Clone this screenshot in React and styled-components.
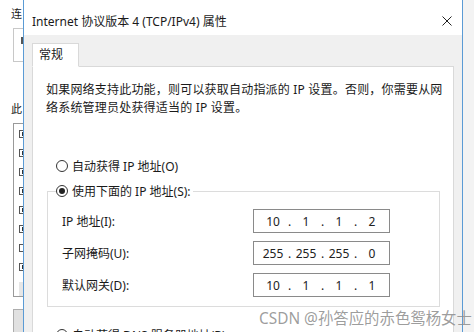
import React from "react";
import styled, { createGlobalStyle } from "styled-components";

const GlobalStyles = createGlobalStyle`
  html, body {
    margin: 0;
    padding: 0;
    overflow: hidden;
    background: #f3f3f3;
  }
  body {
    font-family: "Noto Sans", "Noto Sans CJK SC", sans-serif;
    font-size: 12px;
    color: #1a1a1a;
  }
`;

const Screen = styled.div`
  position: relative;
  display: flex;
  width: 474px;
  height: 332px;
  overflow: hidden;
`;

/* window that lies behind the dialog, only its right edge is visible */
const BackWindow = styled.div`
  width: 23px;
  flex: none;
  overflow: hidden;
  background: #fff;
  display: flex;
  flex-direction: column;
  padding: 7px 0 0 11px;
  box-sizing: border-box;
`;

const BackLabel = styled.div`
  font-size: 11px;
  line-height: 14px;
  margin-top: ${(p) => p.$top || "0"};
`;

const BackField = styled.div`
  width: 40px;
  height: 34px;
  margin: 7px 0 0 2px;
  border: 1px solid #c8c8c8;
  box-sizing: border-box;
  position: relative;
  flex: none;

  &::after {
    content: "";
    position: absolute;
    left: 7px;
    top: 8px;
    width: 2px;
    height: 7px;
    background: #555;
  }
`;

const BackList = styled.div`
  width: 40px;
  height: 174px;
  margin: 7px 0 0 2px;
  border: 1px solid #9a9a9a;
  box-sizing: border-box;
  display: flex;
  flex-direction: column;
  padding: 6px 0 0 5px;
  gap: 11px;
  flex: none;
`;

const BackCheck = styled.div`
  width: 9px;
  height: 9px;
  border: 1px solid #555;
  box-sizing: border-box;
  display: flex;
  align-items: center;
  justify-content: center;

  &::after {
    content: "";
    width: 4px;
    height: 4px;
    background: ${(p) => (p.$on ? "#333" : "transparent")};
  }
`;

const BackScroll = styled.div`
  margin-top: auto;
  height: 14px;
  background: #e6e6e6;
  font-size: 9px;
  line-height: 14px;
  padding-left: 5px;
  color: #333;
`;

const BackButton = styled.div`
  width: 40px;
  height: 30px;
  margin: 12px 0 0 2px;
  background: #e1e1e1;
  border: 1px solid #adadad;
  box-sizing: border-box;
  flex: none;
`;

const Dialog = styled.div`
  width: 440px;
  flex: none;
  display: flex;
  flex-direction: column;
  border-left: 1px solid #5b9bd5;
  border-right: 1px solid #5b9bd5;
  box-sizing: border-box;
  background: #f0f0f0;
`;

const TitleBar = styled.div`
  height: 35px;
  flex: none;
  background: #fff;
  display: flex;
  align-items: center;
  padding: 6px 10px 0 8px;
  box-sizing: border-box;
`;

const Title = styled.div`
  flex: 1;
  font-size: 12px;
  white-space: nowrap;
`;

const Body = styled.div`
  flex: 1;
  display: flex;
  flex-direction: column;
  padding: 8px 8px 0 8px;
`;

const Tabs = styled.div`
  display: flex;
  position: relative;
  z-index: 1;
  margin-bottom: -1px;
`;

const Tab = styled.div`
  width: 47px;
  height: 24px;
  box-sizing: border-box;
  padding-left: 6px;
  line-height: 22px;
  background: ${(p) => (p.$active ? "#fff" : "#f0f0f0")};
  border: 1px solid #d9d9d9;
  border-bottom: 1px solid ${(p) => (p.$active ? "#fff" : "#d9d9d9")};
`;

const Panel = styled.div`
  flex: 1;
  background: #fff;
  border: 1px solid #d9d9d9;
  border-bottom: none;
  padding: 14px 0 0 13px;
  display: flex;
  flex-direction: column;
`;

const Intro = styled.p`
  margin: 0;
  line-height: 18px;
  white-space: nowrap;
  letter-spacing: 0.2px;
`;

const RadioRow = styled.label`
  display: flex;
  align-items: center;
  height: 20px;
  gap: 4px;
  margin: ${(p) => p.$margin || "0"};
  white-space: nowrap;
`;

const RadioDot = styled.span`
  width: 12px;
  height: 12px;
  border-radius: 50%;
  border: 1px solid #333;
  box-sizing: border-box;
  display: flex;
  align-items: center;
  justify-content: center;
  background: #fff;
  flex: none;

  &::after {
    content: "";
    width: 6px;
    height: 6px;
    border-radius: 50%;
    background: ${(p) => (p.$checked ? "#222" : "transparent")};
  }
`;

const GroupBox = styled.fieldset`
  margin: 5px 13px 0 1px;
  padding: 8px 0 9px 14px;
  border: 1px solid #dcdcdc;
  min-width: 0;
  display: grid;
  grid-template-columns: 191px 137px;
  row-gap: 8px;
  align-items: center;
`;

const Legend = styled.legend`
  margin-left: -6px;
  padding: 0 2px 0 0;
  background: #fff;
`;

const FieldLabel = styled.div`
  white-space: nowrap;
`;

const IpBox = styled.div`
  height: 24px;
  box-sizing: border-box;
  border: 1px solid #8a8a8a;
  display: flex;
  align-items: center;
  padding-left: 6px;
  font-size: 12px;
  color: #222;
`;

const Octet = styled.span`
  width: 26px;
  text-align: center;
`;

const Dot = styled.span`
  width: 7px;
  text-align: center;
`;

const RightStrip = styled.div`
  flex: 1;
  background: #f3f3f3;
`;

const Watermark = styled.div`
  position: absolute;
  left: 259px;
  top: 308px;
  font-size: 15.4px;
  line-height: 21px;
  color: rgba(140, 140, 140, 0.85);
  white-space: nowrap;
  pointer-events: none;
`;

function IpAddress({ value }) {
  const parts = value.split(".");
  return (
    <IpBox>
      {parts.map((p, i) => (
        <React.Fragment key={i}>
          {i > 0 && <Dot>.</Dot>}
          <Octet>{p}</Octet>
        </React.Fragment>
      ))}
    </IpBox>
  );
}

const CloseIcon = () => (
  <svg width="10" height="10" viewBox="0 0 10 10">
    <path d="M0.5 0.5 L9.5 9.5 M9.5 0.5 L0.5 9.5" stroke="#222" strokeWidth="1" />
  </svg>
);

const fields = [
  { label: "IP 地址(I):", value: "10.1.1.2" },
  { label: "子网掩码(U):", value: "255.255.255.0" },
  { label: "默认网关(D):", value: "10.1.1.1" },
];

export default function App() {
  return (
    <>
      <GlobalStyles />
      <Screen>
        <BackWindow>
          <BackLabel>连</BackLabel>
          <BackField />
          <BackLabel $top="40px">此</BackLabel>
          <BackList>
            {[1, 1, 1, 1, 1, 1, 0, 1].map((on, i) => (
              <BackCheck key={i} $on={!!on} />
            ))}
            <BackScroll>&lt;</BackScroll>
          </BackList>
          <BackButton />
        </BackWindow>

        <Dialog>
          <TitleBar>
            <Title>Internet 协议版本 4 (TCP/IPv4) 属性</Title>
            <CloseIcon />
          </TitleBar>
          <Body>
            <Tabs>
              <Tab $active>常规</Tab>
            </Tabs>
            <Panel>
              <Intro>
                如果网络支持此功能，则可以获取自动指派的 IP 设置。否则，你需要从网
                <br />
                络系统管理员处获得适当的 IP 设置。
              </Intro>
              <RadioRow $margin="39px 0 0 10px">
                <RadioDot />
                自动获得 IP 地址(O)
              </RadioRow>
              <GroupBox>
                <Legend>
                  <RadioRow>
                    <RadioDot $checked />
                    使用下面的 IP 地址(S):
                  </RadioRow>
                </Legend>
                {fields.map((f) => (
                  <React.Fragment key={f.label}>
                    <FieldLabel>{f.label}</FieldLabel>
                    <IpAddress value={f.value} />
                  </React.Fragment>
                ))}
              </GroupBox>
              <RadioRow $margin="18px 0 0 10px">
                <RadioDot />
                自动获得 DNS 服务器地址(B)
              </RadioRow>
            </Panel>
          </Body>
        </Dialog>
        <RightStrip />
        <Watermark>CSDN @孙答应的赤色鸳杨女士</Watermark>
      </Screen>
    </>
  );
}
